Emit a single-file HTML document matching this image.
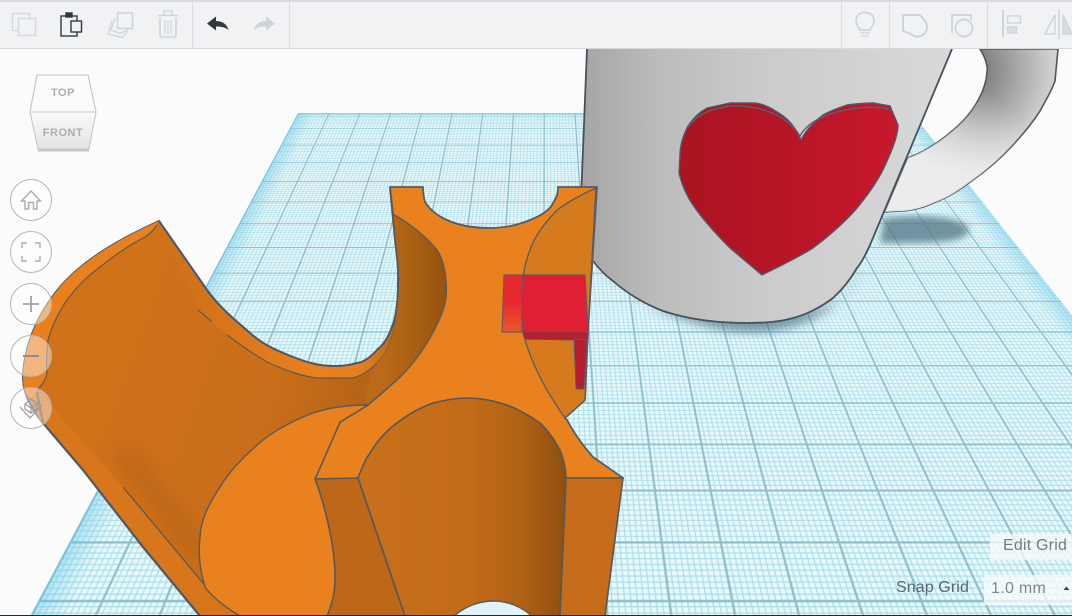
<!DOCTYPE html>
<html>
<head>
<meta charset="utf-8">
<style>
html,body{margin:0;padding:0;background:#fbfbfb;width:1072px;height:616px;overflow:hidden}
#app{position:relative;width:1072px;height:616px;overflow:hidden;contain:paint;background:#fbfbfb;font-family:"Liberation Sans","DejaVu Sans",sans-serif}
#grid{position:absolute;left:0;top:0;width:1000px;height:812px;transform-origin:0 0;
transform:matrix3d(.614,0,0,0,-.3488,.22464,0,-.00064,0,0,1,0,298,113,0,1);
filter:blur(.5px);
background-color:#e8f8fb;
background-image:linear-gradient(to right,rgba(90,195,230,.4),rgba(90,195,230,0) 28px,rgba(90,195,230,0) 972px,rgba(90,195,230,.4)),linear-gradient(to bottom,rgba(90,195,230,.4),rgba(90,195,230,0) 20px),linear-gradient(to right,#8dbfcb 2px,transparent 2px),linear-gradient(to bottom,#8dbfcb 2px,transparent 2px),linear-gradient(to right,#aadde9 1px,transparent 1px),linear-gradient(to bottom,#aadde9 1px,transparent 1px);
background-size:100% 100%,100% 100%,50px 50px,50px 50px,5px 5px,5px 5px}
svg.s{position:absolute;left:0;top:0}
.lbl{position:absolute;white-space:nowrap}
</style>
</head>
<body>
<div id="app">
<div id="grid"></div>

<svg class="s" width="1072" height="616" viewBox="0 0 1072 616">
<defs>
<filter id="b6"><feGaussianBlur stdDeviation="5"/></filter>
<filter id="b9" x="-50%" y="-50%" width="200%" height="200%"><feGaussianBlur stdDeviation="9"/></filter>
<filter id="b3"><feGaussianBlur stdDeviation="3.5"/></filter>
<linearGradient id="mug" gradientUnits="userSpaceOnUse" x1="585" y1="0" x2="950" y2="0"><stop offset="0" stop-color="#a6a6a6"/><stop offset=".2" stop-color="#bcbcbc"/><stop offset=".5" stop-color="#cbcbcb"/><stop offset="1" stop-color="#d9d9d9"/></linearGradient>
<radialGradient id="hd" gradientUnits="userSpaceOnUse" cx="965" cy="70" r="105"><stop offset=".2" stop-color="#808080"/><stop offset=".45" stop-color="#a0a0a0"/><stop offset=".75" stop-color="#c6c6c6"/><stop offset="1" stop-color="#e2e2e2"/></radialGradient>
<linearGradient id="hl" gradientUnits="userSpaceOnUse" x1="1005" y1="105" x2="935" y2="185"><stop offset="0" stop-color="#fff" stop-opacity="0"/><stop offset="1" stop-color="#eeeeee" stop-opacity=".85"/></linearGradient>
<linearGradient id="heart" gradientUnits="userSpaceOnUse" x1="680" y1="0" x2="898" y2="0"><stop offset="0" stop-color="#ab1420"/><stop offset=".5" stop-color="#b71525"/><stop offset="1" stop-color="#c8182c"/></linearGradient>
<linearGradient id="sheet" gradientUnits="userSpaceOnUse" x1="120" y1="300" x2="400" y2="400"><stop offset="0" stop-color="#d0721a"/><stop offset=".6" stop-color="#c86e1a"/><stop offset="1" stop-color="#ae5f16"/></linearGradient>
<linearGradient id="band" gradientUnits="userSpaceOnUse" x1="200" y1="0" x2="400" y2="0"><stop offset="0" stop-color="#d1731b"/><stop offset=".6" stop-color="#ea8120"/><stop offset=".8" stop-color="#e67f1f"/><stop offset="1" stop-color="#b86616"/></linearGradient>
<linearGradient id="cres" gradientUnits="userSpaceOnUse" x1="385" y1="0" x2="448" y2="0"><stop offset="0" stop-color="#ba6a18"/><stop offset="1" stop-color="#94520f"/></linearGradient>
<linearGradient id="arch" gradientUnits="userSpaceOnUse" x1="358" y1="0" x2="566" y2="0"><stop offset="0" stop-color="#c8701b"/><stop offset=".55" stop-color="#c26b18"/><stop offset=".8" stop-color="#ae6015"/><stop offset="1" stop-color="#8e4f10"/></linearGradient>
<linearGradient id="redlow" x1="0" y1="0" x2="0" y2="1"><stop offset="0" stop-color="#e72a30"/><stop offset=".5" stop-color="#e72a30"/><stop offset="1" stop-color="#ea5a2c"/></linearGradient>
</defs>

<!-- shadows -->
<path d="M884,218 C920,214 960,216 968,228 C972,240 950,244 880,243 Z" fill="#4d6f80" opacity=".72" filter="url(#b3)"/>
<path d="M596,262 C640,310 700,330 750,332 C800,332 840,312 862,270 L840,300 C800,320 700,322 640,300 Z" fill="#3f6578" opacity=".65" filter="url(#b6)"/>

<!-- handle -->
<path d="M980,49 C986,58 988,68 987,72 C986,90 975,108 963,121 C950,134 930,150 908,158 L885,212 L900,211 C912,211 925,207 933,203 C950,197 962,188 973,180 C990,168 1003,156 1013,145 C1025,132 1033,122 1040,111 C1046,100 1052,90 1055,81 L1058,49 Z" fill="url(#hd)" stroke="#4a5763" stroke-width="1.6"/>
<path d="M980,49 C986,58 988,68 987,72 C986,90 975,108 963,121 C950,134 930,150 908,158 L885,212 L900,211 C912,211 925,207 933,203 C950,197 962,188 973,180 C990,168 1003,156 1013,145 C1025,132 1033,122 1040,111 C1046,100 1052,90 1055,81 L1058,49 Z" fill="url(#hl)"/>

<!-- mug -->
<path d="M587,49 L579,230 C579,240 585,252 593,261 C600,270 606,276 613,281 C628,294 645,304 663,311 C690,320 720,323 747,323 C765,323 780,322 793,318 C805,315 820,308 833,298 C842,290 850,280 857,268 C862,262 866,254 870,245 L952,49 Z" fill="url(#mug)"/>
<path d="M587,49 L581,200 M593,261 C600,270 606,276 613,281 C628,294 645,304 663,311 C690,320 720,323 747,323 C765,323 780,322 793,318 C805,315 820,308 833,298 C842,290 850,280 857,268 C862,262 866,254 870,245 L952,49" fill="none" stroke="#45525e" stroke-width="1.8"/>

<!-- heart -->
<path d="M801,140 C796,128 788,118 777,112 C768,106 760,103 753,103 L730,103 L707,108 C698,113 692,120 688,126 C683,136 680,147 680,155 L679,173 C682,186 688,198 693,205 C703,220 716,234 730,248 L762,275 C780,266 797,258 813,248 C830,235 845,222 857,208 C870,192 880,178 887,161 C893,148 898,135 898,125 L890,106 L873,103 C864,103 855,104 847,105 C838,108 830,111 823,115 C815,121 806,130 801,140 Z" fill="url(#heart)" stroke="#4f5a6c" stroke-width="1.4" stroke-linejoin="round"/>
<path d="M688,127 C698,113 712,109 730,106 C755,105 785,112 800,136 C806,125 820,115 845,110 C860,107 875,106 889,109" fill="none" stroke="#5c5f70" stroke-width="1.4"/>

<!-- big sheet -->
<path id="sh" d="M159,221 C122,238 85,258 60,287 C38,313 24,345 23,377 C23,395 32,410 43,423 L83,470 L143,547 L200,616 L420,616 L470,300 L398,267 C399,300 396,318 392,327 C388,338 384,344 377,350 C370,358 362,363 357,363 C348,366 340,366 333,366 C318,366 306,362 293,357 C275,350 262,344 250,333 C235,320 220,308 207,290 Z" fill="url(#sheet)" stroke="#4f5a66" stroke-width="2" stroke-linejoin="round"/>
<!-- inner shading next to lower bar -->
<path d="M120,450 L165,505 L200,555" fill="none" stroke="#9a5212" stroke-width="20" opacity=".3" filter="url(#b9)"/>
<!-- top-left bright band -->
<path d="M159,221 C122,238 85,258 60,287 C38,313 24,345 23,377 C23,395 30,405 37,390 C44,382 47,378 47,373 C46,360 47,350 48,340 C52,325 60,310 67,300 C78,285 88,276 100,267 C115,255 130,245 143,238 C150,234 155,230 159,221 Z" fill="#e8801f"/>
<path d="M157,225 C152,232 148,236 143,238 C130,245 115,255 100,267 C88,276 78,285 67,300 C60,310 52,325 48,340 C47,350 46,360 47,373 C46,380 42,385 37,390" fill="none" stroke="#66584a" stroke-width="1.2"/>
<!-- lower-left band -->
<path d="M37,390 L123,487 L203,583 L242,616 L200,616 L143,547 L83,470 L43,423 C36,415 30,405 37,390 Z" fill="#d8761c"/>
<path d="M37,392 L43,423 L83,470 L143,547 L200,616" fill="none" stroke="#4f5a66" stroke-width="2.2"/>
<path d="M123,487 L203,583 C215,595 228,606 242,616" fill="none" stroke="#5f5850" stroke-width="1.3"/>
<!-- top curve band -->
<path d="M159,222 L207,290 C220,308 235,320 250,333 C262,344 275,350 293,357 C306,362 318,366 333,366 C340,366 348,366 357,363 C362,363 370,358 377,350 C384,344 388,338 392,327 L394,333 C389,348 384,355 377,363 C368,372 358,378 350,378 L317,378 C300,376 285,370 267,362 C250,352 240,345 227,335 C215,326 205,318 198,310 Z" fill="url(#band)"/>
<path d="M198,310 L212,322 M227,335 C240,345 250,352 267,362 C285,370 300,376 317,378 L350,378 C358,378 368,372 377,363 C384,355 389,348 393,333 C396,320 398,310 397,297" fill="none" stroke="#66584a" stroke-width="1.2"/>
<path d="M159,221 L207,290 C220,308 235,320 250,333 C262,344 275,350 293,357 C306,362 318,366 333,366 C340,366 348,366 357,363 C362,363 370,358 377,350 C384,344 388,338 392,327 C396,318 399,300 398,267" fill="none" stroke="#4f5a66" stroke-width="2"/>

<!-- central top face -->
<path d="M390,187 L423,187 C423,195 424,198 425,202 C430,210 438,216 447,220 C460,226 475,228 490,228 C505,228 518,225 530,220 C540,216 550,210 553,203 C556,198 558,195 558,187 L597,187 L588,330 L585,400 L565,418 L567,420 C575,435 585,448 593,457 L623,478 L315,479 L340,422 L368,405 L400,377 L400,300 L396,240 Z" fill="#ea811f" stroke="#545c64" stroke-width="1.8" stroke-linejoin="round"/>

<!-- left dark crescent -->
<path d="M392,214 C405,220 425,235 437,250 C447,265 449,295 443,310 C437,328 420,358 400,377 L368,405 C360,395 370,385 377,363 C384,355 389,348 393,333 C397,318 399,300 398,267 C398,250 395,235 392,214 Z" fill="url(#cres)"/>
<path d="M392,214 C405,220 425,235 437,250 C447,265 449,295 443,310 C437,328 420,358 400,377 L368,405" fill="none" stroke="#5c5a56" stroke-width="1.4"/>
<path d="M390,188 L395,240 L398,267 C399,300 396,318 392,327" fill="none" stroke="#4f5a66" stroke-width="1.8"/>

<!-- right crescent -->
<path d="M596,188 C580,195 568,202 557,210 C545,223 535,235 530,250 C524,265 522,280 522,293 C521,310 521,320 523,333 C528,352 535,368 543,383 C550,396 558,408 565,418 L585,400 L588,330 Z" fill="#d67b1d" stroke="#545c64" stroke-width="1.3" stroke-linejoin="round"/>

<!-- bottom-left bright ellipse -->
<path d="M368,405 C345,405 328,408 313,413 C295,420 278,428 263,440 C245,455 230,470 220,487 C208,505 201,520 200,537 C198,555 200,570 205,587 C212,597 225,607 240,616 L327,616 C331,607 335,595 335,580 C336,550 325,505 315,479 L340,422 Z" fill="#ea811f" stroke="#5a5a58" stroke-width="1.4" stroke-linejoin="round"/>

<!-- front left face -->
<path d="M315,479 L358,478 L405,616 L327,616 C331,607 335,595 335,580 C336,550 325,505 315,479 Z" fill="#bd6819" stroke="#54585a" stroke-width="1.5" stroke-linejoin="round"/>
<!-- arch -->
<path d="M358,478 C362,468 365,460 370,453 C378,440 387,430 397,423 C410,413 420,408 433,403 C445,400 456,398 467,398 C482,398 495,401 507,405 C520,410 530,416 540,423 C550,433 555,441 560,450 C564,460 566,470 566,478 L560,616 L405,616 Z" fill="url(#arch)" stroke="#54585a" stroke-width="1.6" stroke-linejoin="round"/>
<!-- front right face -->
<path d="M566,478 L623,478 L605,616 L560,616 Z" fill="#c46c19" stroke="#54585a" stroke-width="1.6" stroke-linejoin="round"/>
<!-- hole -->
<path d="M453,617 C465,606 480,601 493,601 C508,601 522,607 533,617 Z" fill="#dff3f8" stroke="#5a5a58" stroke-width="1.4"/>

<!-- red box -->
<path d="M504,275 L523,275 L522,332 L502,332 Z" fill="url(#redlow)" stroke="#6a5a60" stroke-width="1.2"/>
<path d="M523,275 L585,275 L588,332 L587,340 L525,339 L523,332 C521,312 521,295 523,275 Z" fill="#e01f33" stroke="#5e5a68" stroke-width="1.2"/>
<path d="M523,332 L588,332 L587,340 L525,339 Z" fill="#b3202f"/>
<path d="M523,332 L588,332" stroke="#7a4a5c" stroke-width="1"/>
<path d="M574,339 L587,340 L584,389 L576,389 Z" fill="#b81c30" stroke="#5e5a68" stroke-width="1"/>
</svg>

<!-- toolbar -->
<div style="position:absolute;left:0;top:0;width:1072px;height:48px;background:#f1f2f4;border-bottom:1px solid #d6d8db"></div>
<div style="position:absolute;left:0;top:0;width:1072px;height:2px;background:#d9dbe0"></div>
<div style="position:absolute;left:192px;top:2px;width:1px;height:46px;background:#dcdee1"></div>
<div style="position:absolute;left:289px;top:2px;width:1px;height:46px;background:#dcdee1"></div>
<div style="position:absolute;left:841px;top:2px;width:1px;height:46px;background:#dcdee1"></div>
<div style="position:absolute;left:889px;top:2px;width:1px;height:46px;background:#dcdee1"></div>
<div style="position:absolute;left:987px;top:2px;width:1px;height:46px;background:#dcdee1"></div>

<svg class="s" width="1072" height="616" viewBox="0 0 1072 616">
<!-- copy -->
<g fill="none" stroke="#d5d8dc" stroke-width="1.4">
<rect x="12.5" y="13.5" width="17" height="17"/>
<rect x="18.5" y="18.5" width="17" height="17" fill="#f1f2f4"/>
</g>
<!-- paste -->
<g fill="none" stroke="#35393d" stroke-width="1.4">
<rect x="61" y="16" width="16" height="20"/>
<rect x="66" y="13" width="6" height="4" fill="#35393d"/>
<rect x="71" y="21" width="10.5" height="11" fill="#f1f2f4"/>
</g>
<!-- duplicate -->
<g fill="none" stroke="#d0d4d9" stroke-width="1.3">
<path d="M112,21 L108,34 L122,37.500 L127,32"/>
<path d="M115,18 L111,30 L120,33.500 L128,30"/>
<rect x="117.5" y="13" width="15" height="15.5" fill="#f1f2f4" stroke-width="1.6"/>
</g>
<!-- trash -->
<g fill="none" stroke="#d0d4d9" stroke-width="1.6">
<path d="M158,15.5 H178"/>
<path d="M164,15 V11 H172 V15"/>
<path d="M160,18 V35 Q160,37 162,37 H174 Q176,37 176,35 V18"/>
<path d="M165,20 V34 M171,20 V34 M168,20 V34" stroke-width="1.1"/>
</g>
<!-- undo -->
<path d="M207,23.5 L216,16.5 V21 C222,21 227,24 228.5,30 C225,27 221,26.5 216,26.5 V30.5 Z" fill="#33383d"/>
<!-- redo -->
<path d="M275,23.5 L266,16.5 V21 C260,21 255,24 254,30 C257,27 261,26.5 266,26.5 V30.5 Z" fill="#ced4db"/>
<!-- bulb -->
<g fill="none" stroke="#d0d4d9" stroke-width="1.7">
<path d="M860,30 C858,26 856,25 856,21 C856,15 860,12.5 865,12.5 C870,12.5 874,15 874,21 C874,25 872,26 870,30 Z"/>
<path d="M860,33 H870 M861,36 H869" stroke-width="1.3"/>
</g>
<!-- union -->
<path d="M903,15 H920 C922,18 927,21 927,27 A9.5,9.5 0 0 1 911,34 L903,31 Z" fill="none" stroke="#d0d4d9" stroke-width="2"/>
<!-- group shape -->
<g fill="none" stroke="#d0d4d9" stroke-width="1.8">
<path d="M952,33 V15 H971 V20"/>
<circle cx="964" cy="28" r="8.5"/>
</g>
<!-- align -->
<g fill="none" stroke="#d0d4d9">
<path d="M1003,10 V37" stroke-width="2"/>
<rect x="1007.500" y="16" width="13" height="7" stroke-width="1.4"/>
<rect x="1007.500" y="27" width="9" height="6" fill="#dadde1" stroke-width="1.4"/>
</g>
<!-- mirror -->
<g fill="none" stroke="#d0d4d9">
<path d="M1059,9 V39" stroke-width="1.6"/>
<path d="M1055,15 V34 H1045 Z" stroke-width="1.4"/>
<path d="M1063,15 V34 H1072 Z" stroke-width="1.4" fill="#d8dbdf"/>
</g>

<!-- view cube -->
<path d="M37,75 H88 L96,112 H30 Z" fill="#fbfbfb" stroke="#c4c4c4" stroke-width="1.1" stroke-linejoin="round"/>
<defs><linearGradient id="cb" x1="0" y1="0" x2="0" y2="1"><stop offset="0" stop-color="#fbfbfb"/><stop offset="1" stop-color="#e3e3e3"/></linearGradient></defs>
<path d="M30,112 H96 L89,149 H38 Z" fill="url(#cb)" stroke="#c8c8c8" stroke-width="1.1" stroke-linejoin="round"/>
<path d="M38,150.500 H89" stroke="#c6c6c6" stroke-width="2"/>
<text x="63" y="96" text-anchor="middle" font-family="Liberation Sans, sans-serif" font-weight="700" font-size="11" letter-spacing=".5" fill="#adadad">TOP</text>
<text x="63" y="136" text-anchor="middle" font-family="Liberation Sans, sans-serif" font-weight="700" font-size="11" letter-spacing=".5" fill="#adadad">FRONT</text>

<!-- nav buttons -->
<g fill="#ffffff" fill-opacity=".42" stroke="#b5b5b5" stroke-width="1">
<circle cx="31" cy="200" r="20.500"/>
<circle cx="31" cy="252" r="20.500"/>
<circle cx="31" cy="304" r="20.500"/>
<circle cx="31" cy="356" r="20.500"/>
<circle cx="31" cy="408" r="20.500"/>
</g>
<g fill="none" stroke="#a9adb1" stroke-width="1.4">
<path d="M21.500,201 L31,191 L40.500,201 H37 V209 H33.500 V202.500 H28.500 V209 H25 V201 Z"/>
<path d="M22,248 V243 H27 M35,243 H40 V248 M40,256 V261 H35 M27,261 H22 V256"/>
<path d="M23,304 H39 M31,296 V312" stroke-width="2"/>
<path d="M23,356 H39" stroke="#8f8f8f" stroke-width="2"/>
<path d="M20,407 L30,418 L42,405 M25,404 L31,399 L37,403 L37,409 L31,413 L25,409 Z M25,404 L31,408 L37,403 M31,408 V413" stroke="#9a9a9a" stroke-width="1.2"/>
</g>
</svg>

<!-- grid controls -->
<div style="position:absolute;left:990px;top:534px;width:82px;height:26px;background:rgba(250,252,252,.75)"></div>
<div class="lbl" style="left:1003px;top:537px;font-size:16px;letter-spacing:.2px;color:#707c82">Edit Grid</div>
<div class="lbl" style="left:896px;top:579px;font-size:16px;letter-spacing:.1px;color:#56676f">Snap Grid</div>
<div style="position:absolute;left:984px;top:575px;width:88px;height:30px;background:rgba(250,252,252,.75)"></div>
<div class="lbl" style="left:991px;top:580px;font-size:16px;letter-spacing:.3px;color:#7d888d">1.0 mm</div>
<svg class="s" width="1072" height="616" viewBox="0 0 1072 616"><path d="M1063.500,590 L1066.500,586.500 L1069.500,590 Z" fill="#3c4044"/></svg>
<div style="position:absolute;left:0;top:614.500px;width:1072px;height:1.500px;background:#23282c"></div>
</div>
</body>
</html>
